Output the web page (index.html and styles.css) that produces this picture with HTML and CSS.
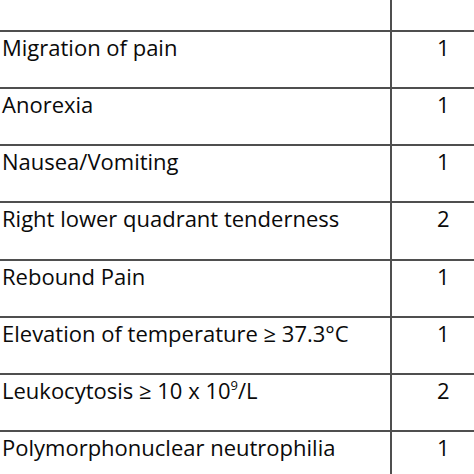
FILE: index.html
```html
<!DOCTYPE html>
<html>
<head>
<meta charset="utf-8">
<link rel="stylesheet" href="styles.css">
</head>
<body>
<div class="table">
  <div class="row head"><div class="label"></div><div class="score"></div></div>
  <div class="row"><div class="label">Migration of pain</div><div class="score">1</div></div>
  <div class="row"><div class="label">Anorexia</div><div class="score">1</div></div>
  <div class="row"><div class="label">Nausea/Vomiting</div><div class="score">1</div></div>
  <div class="row"><div class="label">Right lower quadrant tenderness</div><div class="score">2</div></div>
  <div class="row"><div class="label">Rebound Pain</div><div class="score">1</div></div>
  <div class="row"><div class="label">Elevation of temperature ≥ 37.3°C</div><div class="score">1</div></div>
  <div class="row"><div class="label">Leukocytosis ≥ 10 x 10<sup>9</sup>/L</div><div class="score">2</div></div>
  <div class="row"><div class="label">Polymorphonuclear neutrophilia</div><div class="score">1</div></div>
</div>
</body>
</html>
```
FILE: styles.css
```css
html, body {
  margin: 0;
  padding: 0;
  background: #ffffff;
  overflow: hidden;
}
.table {
  width: 474px;
  font-family: "Open Sans", "Noto Sans", sans-serif;
  font-size: 22px;
  line-height: 28px;
  color: #0a0a0a;
}
.row {
  display: flex;
  height: 57.14px;
  box-sizing: border-box;
  border-top: 2px solid #4f4f4f;
}
.row.head {
  height: 30px;
  border-top: none;
}
.label {
  width: 392px;
  flex: none;
  box-sizing: border-box;
  border-right: 2px solid #4f4f4f;
  padding: 1px 0 0 2px;
  white-space: nowrap;
}
.score {
  flex: 1;
  padding: 1px 0 0 45px;
}
sup {
  font-size: 13px;
  line-height: 0;
  vertical-align: 9px;
}
```
